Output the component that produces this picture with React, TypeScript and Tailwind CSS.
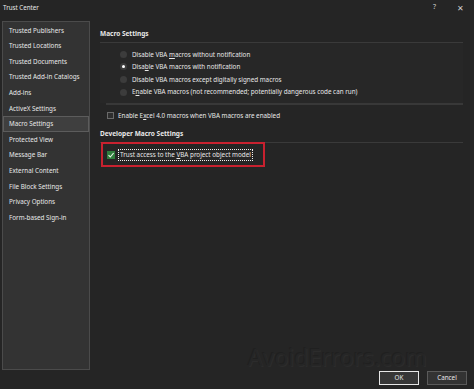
const navItems = [
  "Trusted Publishers",
  "Trusted Locations",
  "Trusted Documents",
  "Trusted Add-in Catalogs",
  "Add-ins",
  "ActiveX Settings",
  "Macro Settings",
  "Protected View",
  "Message Bar",
  "External Content",
  "File Block Settings",
  "Privacy Options",
  "Form-based Sign-in",
];

const Radio = ({ checked, children }: { checked?: boolean; children: React.ReactNode }) => (
  <div className="flex h-[12.6px] items-center whitespace-nowrap">
    <span className="flex h-[7px] w-[7px] items-center justify-center rounded-full bg-[#3c3c3c]">
      {checked && <span className="h-[3px] w-[3px] rounded-full bg-white" />}
    </span>
    <span className="ml-[5px]">{children}</span>
  </div>
);

export default function App() {
  return (
    <div
      className="relative flex h-[389px] w-[474px] flex-col overflow-hidden bg-[#252525] text-[6.3px] text-[#e8e8e8]"
      style={{ fontFamily: '"Noto Sans", sans-serif' }}
    >
      {/* title bar */}
      <div className="flex h-[21px] items-center pl-[3px] pr-[10px]">
        <span className="-mt-[5px] text-[6.2px]">Trust Center</span>
        <span className="-mt-[6px] ml-auto text-[7px] text-[#cfcfcf]">?</span>
        <span className="-mt-[6px] ml-[21px] text-[8px] text-[#cfcfcf]">✕</span>
      </div>

      <div className="flex flex-1">
        {/* sidebar */}
        <div className="ml-[2px] h-[349px] w-[88px] whitespace-nowrap border border-[#4b4b4b] bg-[#333333] pt-[0.5px]">
          {navItems.map((item) => (
            <div
              key={item}
              className={
                item === "Macro Settings"
                  ? "flex h-[15.6px] items-center border border-[#5c5c5c] bg-[#3f3f3f] pl-[5px]"
                  : "flex h-[15.6px] items-center border border-transparent pl-[5px]"
              }
            >
              {item}
            </div>
          ))}
        </div>

        {/* content */}
        <div className="flex-1 pl-[10px] pr-[11px]">
          <div className="mt-[7px] text-[6.5px] font-bold leading-[12px]">Macro Settings</div>
          <div className="mt-[2px] h-px bg-[#3a3a3a]" />
          <div className="bg-[#272727] pb-[5px] pl-[20px] pt-[5px]">
            <Radio>
              Disable VBA <u>m</u>acros without notification
            </Radio>
            <Radio checked>
              Disa<u>b</u>le VBA macros with notification
            </Radio>
            <Radio>Disable VBA macros except digitally signed macros</Radio>
            <Radio>
              E<u>n</u>able VBA macros (not recommended; potentially dangerous code can run)
            </Radio>
          </div>
          <div className="ml-[6px] h-[2px] bg-[#383838]" />
          <div className="ml-[7px] mt-[6px] flex h-[9px] items-center whitespace-nowrap">
            <span className="h-[7px] w-[7px] border border-[#6a6a6a] bg-[#2e2e2e]" />
            <span className="ml-[4px]">
              Enable E<u>x</u>cel 4.0 macros when VBA macros are enabled
            </span>
          </div>
          <div className="mt-[8px] text-[6.5px] font-bold leading-[12px]">Developer Macro Settings</div>
          <div className="relative mt-[2px] h-px bg-[#3a3a3a]">
            <div className="absolute left-[1px] top-[0px] flex h-[25px] w-[164px] items-center whitespace-nowrap border-2 border-[#c8212f] bg-[#252525] pl-[4px]">
              <span className="flex h-[8px] w-[8px] shrink-0 items-center justify-center bg-[#2f7d3c]">
                <svg viewBox="0 0 8 8" className="h-[8px] w-[8px]">
                  <path d="M1.5 4.2 L3.3 6 L6.6 2" stroke="#e8f5e8" strokeWidth="1.1" fill="none" />
                </svg>
              </span>
              <span className="ml-[3px] border border-dotted border-[#f0f0f0] px-[1px] leading-[10px]">
                Trust access to the <u>V</u>BA project object model
              </span>
            </div>
          </div>
        </div>
      </div>

      {/* watermark */}
      <div className="pointer-events-none absolute left-[248px] top-[340px] text-[23px] text-[#262626] [text-shadow:-1px_-1px_0_#202020,1px_1px_0_#2c2c2c]">
        AvoidErrors.com
      </div>

      {/* buttons */}
      <div className="absolute bottom-[4px] right-[7px] flex gap-[8px]">
        <button className="flex h-[14px] w-[40px] items-center justify-center border border-[#e6e6e6] bg-[#363636] text-[6.3px] leading-none text-[#e8e8e8]">
          OK
        </button>
        <button className="flex h-[14px] w-[40px] items-center justify-center border border-[#5a5a5a] bg-[#333333] text-[6.3px] leading-none text-[#e8e8e8]">
          Cancel
        </button>
      </div>
    </div>
  );
}
